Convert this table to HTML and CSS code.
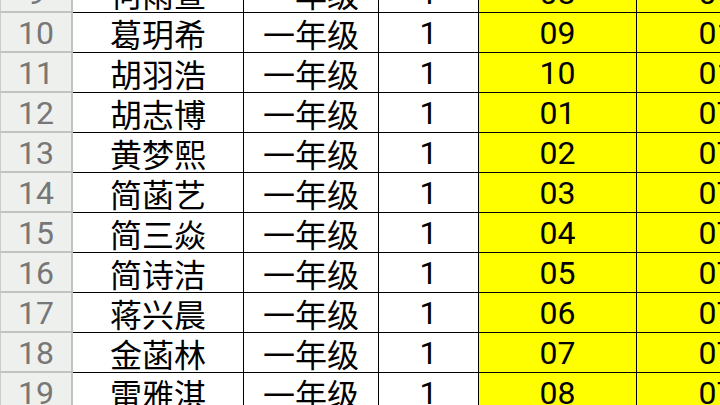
FILE: index.html
```html
<!DOCTYPE html>
<html>
<head>
<meta charset="utf-8">
<link rel="stylesheet" href="styles.css">
</head>
<body>
<div class="sheet">
  <div class="row"><div class="hd">9</div><div class="c name">何雨萱</div><div class="c grade">一年级</div><div class="c num">1</div><div class="c y">08</div><div class="c y last">01</div></div>
  <div class="row"><div class="hd">10</div><div class="c name">葛玥希</div><div class="c grade">一年级</div><div class="c num">1</div><div class="c y">09</div><div class="c y last">01</div></div>
  <div class="row"><div class="hd">11</div><div class="c name">胡羽浩</div><div class="c grade">一年级</div><div class="c num">1</div><div class="c y">10</div><div class="c y last">01</div></div>
  <div class="row"><div class="hd">12</div><div class="c name">胡志博</div><div class="c grade">一年级</div><div class="c num">1</div><div class="c y">01</div><div class="c y last">07</div></div>
  <div class="row"><div class="hd">13</div><div class="c name">黄梦熙</div><div class="c grade">一年级</div><div class="c num">1</div><div class="c y">02</div><div class="c y last">07</div></div>
  <div class="row"><div class="hd">14</div><div class="c name">简菡艺</div><div class="c grade">一年级</div><div class="c num">1</div><div class="c y">03</div><div class="c y last">07</div></div>
  <div class="row"><div class="hd">15</div><div class="c name">简三焱</div><div class="c grade">一年级</div><div class="c num">1</div><div class="c y">04</div><div class="c y last">07</div></div>
  <div class="row"><div class="hd">16</div><div class="c name">简诗洁</div><div class="c grade">一年级</div><div class="c num">1</div><div class="c y">05</div><div class="c y last">07</div></div>
  <div class="row"><div class="hd">17</div><div class="c name">蒋兴晨</div><div class="c grade">一年级</div><div class="c num">1</div><div class="c y">06</div><div class="c y last">07</div></div>
  <div class="row"><div class="hd">18</div><div class="c name">金菡林</div><div class="c grade">一年级</div><div class="c num">1</div><div class="c y">07</div><div class="c y last">07</div></div>
  <div class="row"><div class="hd">19</div><div class="c name">雷雅淇</div><div class="c grade">一年级</div><div class="c num">1</div><div class="c y">08</div><div class="c y last">07</div></div>
</div>
</body>
</html>
```
FILE: styles.css
```css
html, body {
  margin: 0;
  padding: 0;
  background: #ffffff;
  overflow: hidden;
  width: 720px;
  height: 405px;
}
.sheet {
  margin-top: -27px;
  width: 820px;
  font-family: "Roboto", "Noto Sans CJK SC", sans-serif;
  font-size: 32px;
  color: #000;
}
.row {
  display: grid;
  grid-template-columns: 73px 171px 135px 100px 158px 160px;
  height: 40px;
}
.hd, .c {
  box-sizing: border-box;
  display: flex;
  align-items: center;
  justify-content: center;
  white-space: nowrap;
  overflow: hidden;
}
.hd {
  background: #eef0ee;
  color: #777777;
  border-left: 1px solid #c9ccc9;
  border-right: 2px solid #c0c3c0;
  border-bottom: 2px solid #c0c3c0;
  padding-top: 1px;
}
.c {
  border-right: 1px solid #000;
  border-bottom: 1px solid #000;
}
.y {
  background: #ffff00;
}
```
